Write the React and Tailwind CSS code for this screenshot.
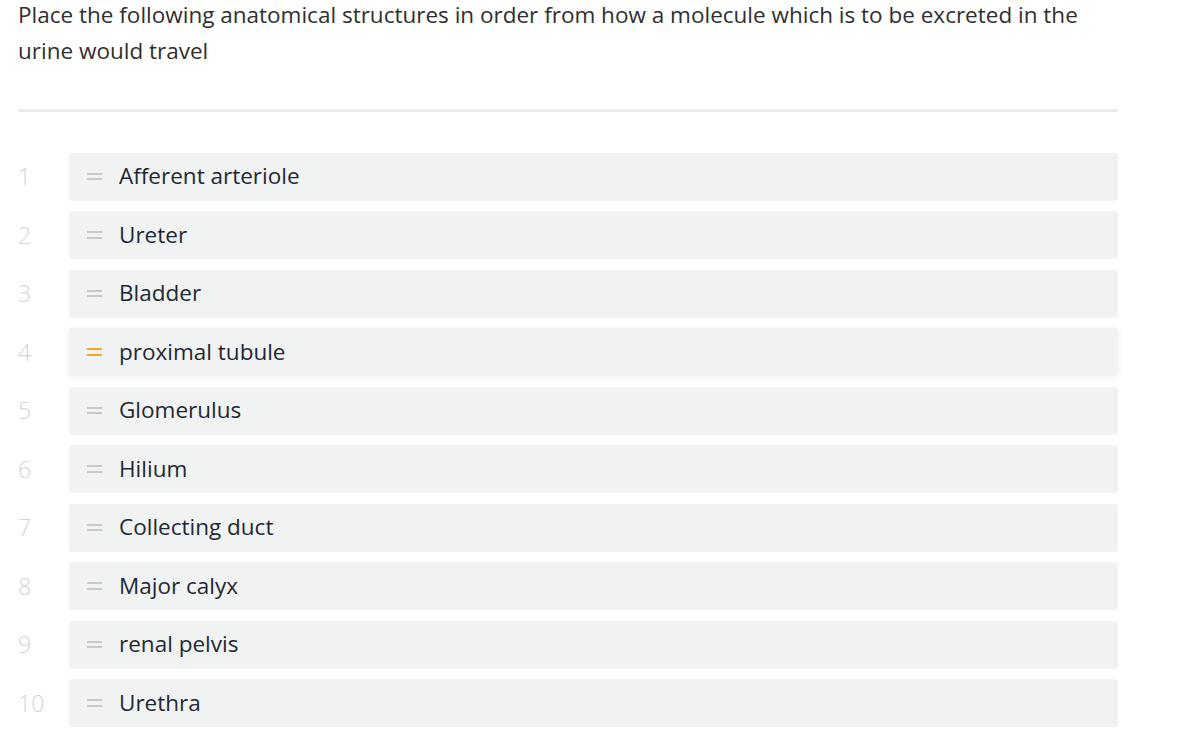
import React from 'react';

const items = [
  'Afferent arteriole',
  'Ureter',
  'Bladder',
  'proximal tubule',
  'Glomerulus',
  'Hilium',
  'Collecting duct',
  'Major calyx',
  'renal pelvis',
  'Urethra',
];

function Handle({ active }) {
  return (
    <div className="flex w-[15px] flex-col gap-[3.5px]">
      <span className={`block h-[2px] w-full ${active ? 'bg-[#f5a623]' : 'bg-[#c8c9c9]'}`} />
      <span className={`block h-[2px] w-full ${active ? 'bg-[#f5a623]' : 'bg-[#c8c9c9]'}`} />
    </div>
  );
}

export default function App() {
  return (
    <div
      className="min-h-screen bg-white px-[18px]"
      style={{ fontFamily: '"Open Sans", "Liberation Sans", sans-serif' }}
    >
      <div className="w-[1100px]">
        {/* Question */}
        <p className="-mt-[3px] text-[22.5px] leading-[36px] text-[#2f2f2f]">
          Place the following anatomical structures in order from how a molecule which is to be excreted in the urine
          would travel
        </p>

        <div className="mt-[40px] h-[3px] bg-[#ebebeb]" />

        {/* Sortable list */}
        <ol className="mt-[40.5px] flex flex-col gap-[10.5px]">
          {items.map((item, i) => {
            const active = i === 3;
            return (
              <li key={item} className="flex items-center">
                <span className="w-[51px] text-[23px] font-light leading-none text-[#d3d3d3]">{i + 1}</span>
                <div
                  className={`flex h-[48px] flex-1 items-center gap-[17px] rounded-[3px] bg-[#f1f2f2] pl-[18px] ${
                    active ? 'shadow-[0_1px_6px_rgba(0,0,0,0.08)]' : ''
                  }`}
                >
                  <Handle active={active} />
                  <span className="text-[22.5px] leading-none text-[#1f2933]">{item}</span>
                </div>
              </li>
            );
          })}
        </ol>
      </div>
    </div>
  );
}
